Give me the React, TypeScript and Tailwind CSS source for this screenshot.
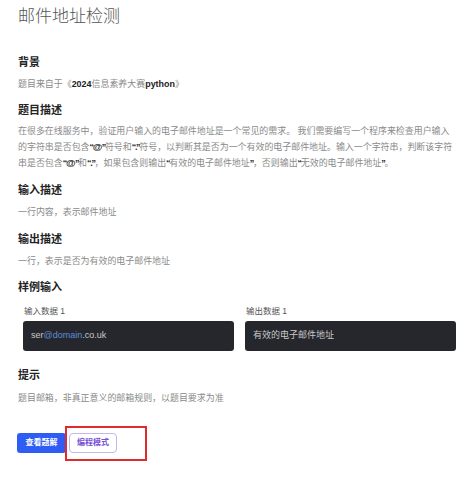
import React from "react";

const font = { fontFamily: '"Liberation Sans", "Noto Sans CJK SC", sans-serif' };

function H({ children, className = "" }: { children: React.ReactNode; className?: string }) {
  return (
    <div className={`text-[11px] leading-[16px] font-bold text-[#222] ${className}`}>{children}</div>
  );
}

function P({ children, className = "" }: { children: React.ReactNode; className?: string }) {
  return <div className={`text-[8.95px] leading-[16px] text-[#8a8a8a] ${className}`}>{children}</div>;
}

const Q = ({ c }: { c: string }) => <span className="text-[#222] font-bold tracking-[-1.3px]">{c}</span>;
const At = () => <span className="text-[#222] font-bold text-[9.8px] leading-[10px] tracking-[-0.5px]">@</span>;

export default function App() {
  return (
    <div className="w-[474px] h-[480px] bg-white overflow-hidden px-[18px]" style={font}>
      <div className="pt-[5px] text-[17px] leading-[24px] font-light text-[#555]">邮件地址检测</div>

      <H className="mt-[25px]">背景</H>
      <P className="mt-[6px]">
        题目来自于《<span className="font-bold text-[#222]">2024</span>信息素养大赛
        <span className="font-bold text-[#222]">python</span>》
      </P>

      <H className="mt-[10px]">题目描述</H>
      <P className="mt-[5px]">
        在很多在线服务中，验证用户输入的电子邮件地址是一个常见的需求。 我们需要编写一个程序来检查用户输入的字符串是否包含
        <Q c={"\u201c"} />
        <At />
        <Q c={"\u201d"} />
        符号和
        <Q c={"\u201c.\u201d"} />
        符号，以判断其是否为一个有效的电子邮件地址。输入一个字符串，判断该字符串是否包含
        <Q c={"\u201c"} />
        <At />
        <Q c={"\u201d"} />和<Q c={"\u201c.\u201d"} />，如果包含则输出<Q c={"\u201c"} />有效的电子邮件地址<Q c={"\u201d"} />，否则输出<Q c={"\u201c"} />无效的电子邮件地址<Q c={"\u201d"} />。
      </P>

      <H className="mt-[11px]">输入描述</H>
      <P className="mt-[6px]">一行内容，表示邮件地址</P>

      <H className="mt-[11px]">输出描述</H>
      <P className="mt-[6px]">一行，表示是否为有效的电子邮件地址</P>

      <H className="mt-[10px]">样例输入</H>
      <div className="mt-[10px] pl-[5px] grid grid-cols-2 gap-x-[11px]">
        <div>
          <div className="pl-[1px] text-[8.5px] leading-[12px] text-[#555]">输入数据 1</div>
          <div className="mt-[4px] h-[30px] rounded-[3px] bg-[#25272d] flex items-center px-[8px] text-[9px] text-[#c9c9c9]">
            ser<span className="text-[#5b8fd8]">@domain</span>.co.uk
          </div>
        </div>
        <div>
          <div className="pl-[1px] text-[8.5px] leading-[12px] text-[#555]">输出数据 1</div>
          <div className="mt-[4px] h-[30px] rounded-[3px] bg-[#25272d] flex items-center px-[8px] text-[9px] text-[#c9c9c9]">
            有效的电子邮件地址
          </div>
        </div>
      </div>

      <H className="mt-[16px]">提示</H>
      <P className="mt-[7px]">题目邮箱，非真正意义的邮箱规则，以题目要求为准</P>

      <div className="relative mt-[27px] flex items-center gap-[3px] -ml-[1px]">
        <button className="w-[49px] h-[20px] rounded-[3px] bg-[#2f5cf2] text-white text-[8px] font-bold flex items-center justify-center">
          查看题解
        </button>
        <button className="w-[48px] h-[20px] rounded-[4px] bg-white border border-[#c3b8ec] text-[#7650d6] text-[8px] font-bold flex items-center justify-center">
          编程模式
        </button>
        <div className="absolute left-[48px] top-[-7px] w-[82px] h-[35px] border-2 border-[#e02b2b] pointer-events-none" />
      </div>
    </div>
  );
}
